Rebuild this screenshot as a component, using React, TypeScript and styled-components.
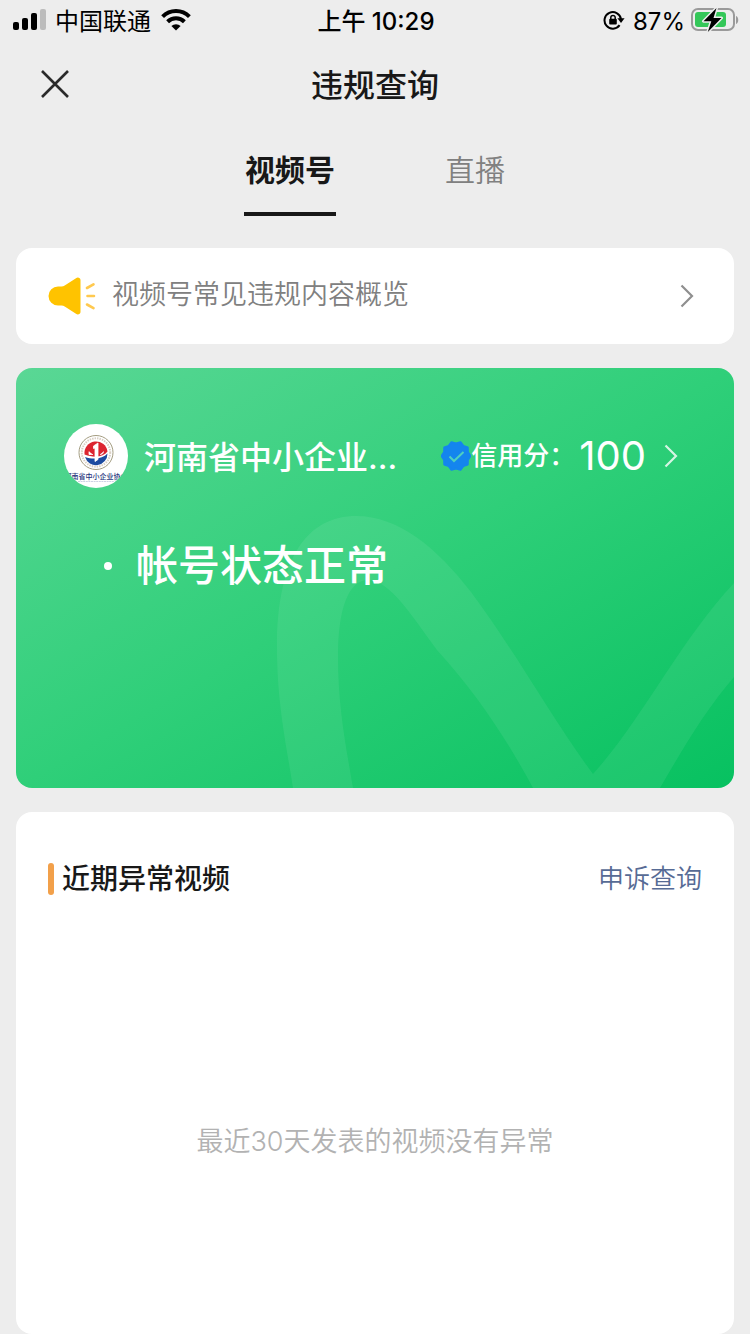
import React from 'react';
import styled, { createGlobalStyle } from 'styled-components';

const GlobalStyle = createGlobalStyle`
  *, *::before, *::after { box-sizing: border-box; }
  body {
    margin: 0;
    background: #ededed;
    color: #181818;
    font-family: Inter, "Noto Sans CJK SC", sans-serif;
  }
  button, a { font: inherit; color: inherit; text-decoration: none; }
  button { border: 0; padding: 0; background: none; cursor: pointer; }
  h1, h2, p, ul { margin: 0; padding: 0; font: inherit; }
  svg { display: block; flex: none; }
`;

const Page = styled.div`
  min-height: 100vh;
  display: flex;
  flex-direction: column;
`;

const StatusBar = styled.div`
  display: grid;
  grid-template-columns: 1fr auto 1fr;
  align-items: center;
  height: 40px;
  padding: 0 11px 0 13px;
  color: #000;
  font-size: 24px;
  line-height: 36px;
`;

const StatusGroup = styled.div<{ $end?: boolean }>`
  display: flex;
  align-items: center;
  justify-content: ${(p) => (p.$end ? 'flex-end' : 'flex-start')};
  gap: ${(p) => (p.$end ? 6 : 9)}px;
`;

const StatusText = styled.span`
  padding-top: 3px;
`;

const Clock = styled.time`
  padding-top: 3px;
  font-weight: 500;
`;

const NavBar = styled.header`
  display: grid;
  grid-template-columns: 1fr auto 1fr;
  align-items: center;
  height: 88px;
  padding: 0 40px;
`;

const CloseButton = styled.button`
  justify-self: start;
`;

const Title = styled.h1`
  padding-top: 3px;
  font-size: 32px;
  line-height: 48px;
  font-weight: 500;
`;

const Tabs = styled.nav`
  display: flex;
  justify-content: center;
  gap: 108px;
  height: 88px;
`;

const Tab = styled.button<{ $active?: boolean }>`
  display: flex;
  align-items: flex-start;
  height: 88px;
  padding: 20px 1px 0;
  border-bottom: 4px solid ${(p) => (p.$active ? '#181818' : 'transparent')};
  color: ${(p) => (p.$active ? '#181818' : '#808080')};
  font-size: 30px;
  line-height: 44px;
  font-weight: ${(p) => (p.$active ? 700 : 350)};
`;

const Main = styled.main`
  flex: 1;
  display: flex;
  flex-direction: column;
  gap: 24px;
  padding: 32px 16px 0;
`;

const Notice = styled.a`
  display: flex;
  align-items: center;
  gap: 16px;
  height: 96px;
  padding: 0 40px 0 32px;
  border-radius: 16px;
  background: #fff;
  color: #808080;
  font-size: 27px;
  line-height: 40px;
  font-weight: 350;
`;

const NoticeText = styled.span`
  flex: 1;
  padding-bottom: 2px;
`;

const AccountCard = styled.section`
  position: relative;
  overflow: hidden;
  min-height: 420px;
  padding: 56px 56px 56px 48px;
  border-radius: 16px;
  background: linear-gradient(to bottom right, #5ad795 0%, #2fcf79 50%, #07c160 100%);
  color: #fff;
`;

const Ribbon = styled.svg`
  position: absolute;
  right: 0;
  bottom: 0;
`;

const AccountRow = styled.div`
  position: relative;
  display: flex;
  align-items: center;
  height: 64px;
`;

const AccountName = styled.h2`
  margin-left: 16px;
  padding-top: 3px;
  white-space: nowrap;
  font-size: 32px;
  line-height: 48px;
  font-weight: 500;
`;

const Score = styled.a`
  display: flex;
  align-items: center;
  margin-left: auto;
  white-space: nowrap;
`;

const ScoreLabel = styled.span`
  font-size: 26px;
  line-height: 40px;
  font-weight: 500;
`;

const ScoreValue = styled.span`
  margin: 0 18px 0 4px;
  font-size: 40px;
  line-height: 48px;
`;

const StateList = styled.ul`
  position: relative;
  margin-top: 46px;
  padding-left: 40px;
  list-style: none;
`;

const StateItem = styled.li`
  display: flex;
  align-items: center;
  gap: 24px;
  font-size: 42px;
  line-height: 64px;
  font-weight: 500;

  &::before {
    content: '';
    width: 8px;
    height: 8px;
    border-radius: 50%;
    background: #fff;
  }
`;

const VideosCard = styled.section`
  flex: 1;
  display: flex;
  flex-direction: column;
  padding: 47px 32px;
  border-radius: 16px;
  background: #fff;
`;

const SectionHead = styled.div`
  display: flex;
  align-items: center;
  justify-content: space-between;
  line-height: 40px;
`;

const SectionTitle = styled.h2`
  display: flex;
  align-items: center;
  gap: 8px;
  font-size: 28px;
  font-weight: 500;

  &::before {
    content: '';
    width: 6px;
    height: 32px;
    border-radius: 3px;
    background: #f2a04a;
  }
`;

const AppealLink = styled.a`
  color: #576b95;
  font-size: 26px;
  font-weight: 350;
`;

const Empty = styled.p`
  padding-top: 223px;
  text-align: center;
  color: #b2b2b2;
  font-size: 27px;
  line-height: 40px;
  font-weight: 350;
`;

const SignalIcon = () => (
  <svg width="33" height="22" viewBox="0 0 33 22" aria-hidden="true">
    <rect x="0" y="13" width="6" height="8" rx="2" />
    <rect x="9" y="9" width="6" height="12" rx="2" />
    <rect x="18" y="4" width="6" height="17" rx="2" />
    <rect x="27" y="0" width="6" height="21" rx="2" fill="#bcbcbc" />
  </svg>
);

const WifiIcon = () => (
  <svg width="32" height="22" viewBox="-1 0 32 22" aria-hidden="true">
    <g fill="none" stroke="#000" strokeWidth="4">
      <path d="M1.600 7.600a19 19 0 0 1 26.800 0" />
      <path d="M6.600 12.800a12 12 0 0 1 16.800 0" />
    </g>
    <path d="M15 21.600l-4.600-4.600a6.600 6.600 0 0 1 9.200 0z" />
  </svg>
);

const RotationLockIcon = () => (
  <svg width="24" height="20" viewBox="0 0 24 20" aria-hidden="true">
    <path d="M16.600 15.200A8.300 8.300 0 1 1 18 9" fill="none" stroke="#000" strokeWidth="2" />
    <path d="M14.400 8.200h7.200L18 13z" />
    <rect x="6.200" y="8.800" width="7.600" height="5.800" rx="1" />
    <path d="M7.800 9.200V7.600a2.200 2.200 0 0 1 4.400 0v1.600" fill="none" stroke="#000" strokeWidth="1.500" />
  </svg>
);

const BatteryIcon = () => (
  <svg width="48" height="26" viewBox="0 0 48 26" aria-hidden="true">
    <rect x="1" y="2" width="42" height="21" rx="6" fill="none" stroke="#9a9a9a" strokeWidth="2" />
    <path d="M45 9c3 1 3 7 0 8z" fill="#9a9a9a" />
    <rect x="4" y="5" width="31" height="15" rx="3" fill="#34c759" />
    <path
      d="M25.500 1L12.500 14.200h7.800L16.800 25 30.500 11h-8z"
      fill="#000"
      stroke="#ededed"
      strokeWidth="3"
      strokeLinejoin="round"
      paintOrder="stroke"
    />
  </svg>
);

const CloseIcon = () => (
  <svg width="30" height="30" viewBox="0 0 30 30" fill="none" stroke="#2a2a2a" strokeWidth="2.600" aria-hidden="true">
    <path d="M2 2l26 26M28 2L2 28" />
  </svg>
);

const SpeakerIcon = () => (
  <svg width="48" height="40" viewBox="0 0 48 40" aria-hidden="true">
    <path
      d="M10 10.500h3.500c1.200 0 2.200-.3 3.200-1L28 2.200c1.800-1.300 4.500-.3 4.500 1.800v32c0 2.100-2.700 3.100-4.500 1.800L16.700 30.500c-1-.7-2-1-3.200-1H10a9.500 9.500 0 0 1 0-19z"
      fill="#ffc300"
    />
    <g fill="none" stroke="#ffc94f" strokeWidth="2.600" strokeLinecap="round">
      <path d="M39 12l6.500-3.600M39.500 20h6.500M39 28.500l6.500 3.600" />
    </g>
  </svg>
);

const ChevronIcon = ({ color }: { color: string }) => (
  <svg width="14" height="24" viewBox="0 0 14 24" fill="none" stroke={color} strokeWidth="2.200" aria-hidden="true">
    <path d="M1.500 1.500L12 12 1.500 22.500" />
  </svg>
);

const badgePoints = Array.from({ length: 20 }, (_, i) => {
  const radius = i % 2 ? 12.5 : 14.5;
  const angle = ((i + 1) * Math.PI) / 10;
  return `${15 + radius * Math.sin(angle)},${15 - radius * Math.cos(angle)}`;
}).join(' ');

const VerifiedIcon = () => (
  <svg width="30" height="30" viewBox="0 0 30 30" aria-hidden="true">
    <polygon points={badgePoints} fill="#1485ee" strokeLinejoin="round" stroke="#1485ee" strokeWidth="2" />
    <path d="M8.500 15.500l4.500 4.500 9.500-9" fill="none" stroke="#4fd0c0" strokeWidth="2" />
  </svg>
);

const AvatarLogo = () => (
  <svg width="64" height="64" viewBox="0 0 64 64" aria-hidden="true">
    <clipPath id="avatar">
      <circle cx="32" cy="32" r="32" />
    </clipPath>
    <g clipPath="url(#avatar)">
      <rect width="64" height="64" fill="#fff" />
      <circle cx="32" cy="28.500" r="17" fill="none" stroke="#a39c80" strokeWidth="1" />
      <circle cx="32" cy="28.500" r="14.200" fill="none" stroke="#d9cfc4" strokeWidth="2" strokeDasharray="1.500 1" />
      <path d="M20.500 30.500a11.500 11.500 0 1 1 23-3c-4 5-12 7-23 3z" fill="#dc2430" />
      <path d="M21 33c9 3 18 1.500 22.500-3.500A11.500 11.500 0 0 1 21 33z" fill="#1d4ba0" />
      <path
        d="M29.500 22l4.500-3v16.500l-3 2V24l-1.500.5zM25 27.500v3h4M36 30.500c2 0 3.500-1 3.500-3"
        fill="#fff"
        stroke="#fff"
        strokeWidth=".8"
      />
      <text x="32" y="55" textAnchor="middle" fontSize="7" fontWeight="500" fill="#26347c">
        河南省中小企业协会
      </text>
      <path d="M14 57.500h36" stroke="#b9bfd8" strokeWidth=".7" strokeDasharray="2 .6" />
    </g>
  </svg>
);

export default function App() {
  return (
    <>
      <GlobalStyle />
      <Page>
        <StatusBar>
          <StatusGroup>
            <SignalIcon />
            <StatusText>中国联通</StatusText>
            <WifiIcon />
          </StatusGroup>
          <Clock>上午 10:29</Clock>
          <StatusGroup $end>
            <RotationLockIcon />
            <StatusText>87%</StatusText>
            <BatteryIcon />
          </StatusGroup>
        </StatusBar>

        <NavBar>
          <CloseButton type="button" aria-label="关闭">
            <CloseIcon />
          </CloseButton>
          <Title>违规查询</Title>
        </NavBar>

        <Tabs>
          <Tab type="button" $active>视频号</Tab>
          <Tab type="button">直播</Tab>
        </Tabs>

        <Main>
          <Notice href="#overview">
            <SpeakerIcon />
            <NoticeText>视频号常见违规内容概览</NoticeText>
            <ChevronIcon color="#8f8f8f" />
          </Notice>

          <AccountCard>
            <Ribbon width="460" height="276" viewBox="0 0 460 276" aria-hidden="true">
              <path
                d="M19 276C11 225 3 190 3 135C3 45 34 4 82 4C125 4 163 36 197 80C243 142 280 210 319 262C368 208 405 130 460 71V165C430 200 410 235 386 276H259C232 226 203 182 163 138C138 104 116 68 94 68C74 68 64 98 64 145C64 195 72 235 79 276Z"
                fill="#fff"
                fillOpacity=".07"
              />
            </Ribbon>
            <AccountRow>
              <AvatarLogo />
              <AccountName>河南省中小企业...</AccountName>
              <Score href="#score">
                <VerifiedIcon />
                <ScoreLabel>信用分：</ScoreLabel>
                <ScoreValue>100</ScoreValue>
                <ChevronIcon color="#d5f5e3" />
              </Score>
            </AccountRow>
            <StateList>
              <StateItem>帐号状态正常</StateItem>
            </StateList>
          </AccountCard>

          <VideosCard>
            <SectionHead>
              <SectionTitle>近期异常视频</SectionTitle>
              <AppealLink href="#appeal">申诉查询</AppealLink>
            </SectionHead>
            <Empty>最近30天发表的视频没有异常</Empty>
          </VideosCard>
        </Main>
      </Page>
    </>
  );
}
